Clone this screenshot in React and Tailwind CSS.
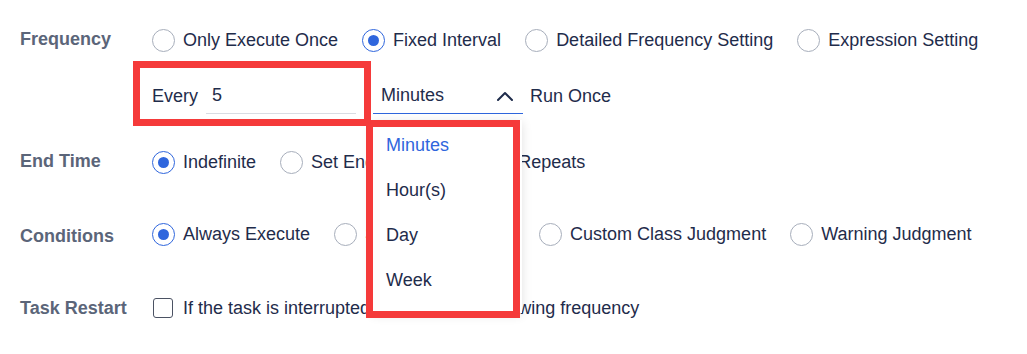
import React from "react";

const Radio = ({ checked }) => (
    <span
        className={`w-[23px] h-[23px] rounded-full shrink-0 flex items-center justify-center bg-white ${
            checked ? "border-[1.5px] border-[#2f66dd]" : "border border-[#a7aebb]"
        }`}
    >
        {checked && <span className="w-[11px] h-[11px] rounded-full bg-[#2f66dd]" />}
    </span>
);

const Option = ({ label, checked, labelClass = "" }) => (
    <label className="flex items-center gap-[8px] shrink-0">
        <Radio checked={checked} />
        <span className={`whitespace-nowrap ${labelClass}`}>{label}</span>
    </label>
);

const Row = ({ label, labelClass = "", className = "", children }) => (
    <div className={`flex items-center h-[40px] ${className}`}>
        <div className={`w-[132px] shrink-0 font-bold text-[#5b6579] ${labelClass}`}>{label}</div>
        <div className="flex items-center">{children}</div>
    </div>
);

const units = ["Minutes", "Hour(s)", "Day", "Week"];

export default function App() {
    return (
        <div
            className="relative w-[1027px] h-[354px] overflow-hidden bg-white text-[18px] text-[#1f2c4b] pl-[20px] pt-[20px]"
            style={{ fontFamily: '"Liberation Sans", Arial, sans-serif' }}
        >
            {/* Frequency */}
            <Row label="Frequency" labelClass="-mt-[2px]">
                <div className="flex items-center gap-[24px]">
                    <Option label="Only Execute Once" />
                    <Option label="Fixed Interval" checked />
                    <Option label="Detailed Frequency Setting" />
                    <Option label="Expression Setting" />
                </div>
            </Row>

            {/* interval inputs */}
            <div className="flex items-center h-[40px] mt-[16px] pl-[132px]">
                <span className="mr-[8px]">Every</span>
                <div className="w-[150px] h-[36px] flex items-center pl-[6px] border-b border-[#d9dce3]">5</div>
                <div className="ml-[17px] w-[150px] h-[36px] flex items-center justify-between pl-[8px] pr-[9px] border-b border-[#2f66dd]">
                    <span>Minutes</span>
                    <svg width="18" height="10" viewBox="0 0 18 10" fill="none">
                        <polyline points="2,9 9,2 16,9" stroke="#1f2c4b" strokeWidth="2" strokeLinecap="round" strokeLinejoin="round" />
                    </svg>
                </div>
                <span className="ml-[7px]">Run Once</span>
            </div>

            {/* End Time */}
            <Row label="End Time" className="mt-[26px]" labelClass="-mt-[2px]">
                <div className="flex items-center gap-[24px]">
                    <Option label="Indefinite" checked />
                    <label className="flex items-center gap-[8px]">
                        <Radio />
                        <span className="whitespace-nowrap">Set End After</span>
                        <span className="w-[85px] h-[30px] border-b border-[#d9dce3] pl-[6px] flex items-center">10</span>
                        <span className="whitespace-nowrap">Repeats</span>
                    </label>
                </div>
            </Row>

            {/* Conditions */}
            <Row label="Conditions" className="mt-[32px]" labelClass="mt-[5px]">
                <div className="flex items-center gap-[24px]">
                    <Option label="Always Execute" checked />
                    <Option label="Status Judgment" labelClass="w-[150px]" />
                    <Option label="Custom Class Judgment" />
                    <Option label="Warning Judgment" />
                </div>
            </Row>

            {/* Task Restart */}
            <Row label="Task Restart" className="mt-[34px]">
                <label className="flex items-center gap-[10px] pl-[1px]">
                    <span className="w-[20px] h-[20px] rounded-[3px] border-[1.5px] border-[#4b5263] bg-white" />
                    <span className="whitespace-nowrap">If the task is interrupted, retry it at the following frequency</span>
                </label>
            </Row>

            {/* dropdown menu */}
            <div className="absolute left-[372px] top-[120px] w-[150px] bg-white shadow-[0_2px_10px_rgba(0,0,0,0.12)] pt-[3px] pb-[10px]">
                {units.map((u, i) => (
                    <div
                        key={u}
                        className={`h-[45px] flex items-center pl-[14px] ${i === 0 ? "text-[#2f66dd]" : ""}`}
                    >
                        {u}
                    </div>
                ))}
            </div>

            {/* annotation boxes */}
            <div className="absolute left-[133px] top-[61px] w-[238px] h-[65px] border-[7px] border-[#f53a3a] pointer-events-none" />
            <div className="absolute left-[366px] top-[120px] w-[154px] h-[198px] border-[7px] border-[#f53a3a] pointer-events-none" />
        </div>
    );
}
